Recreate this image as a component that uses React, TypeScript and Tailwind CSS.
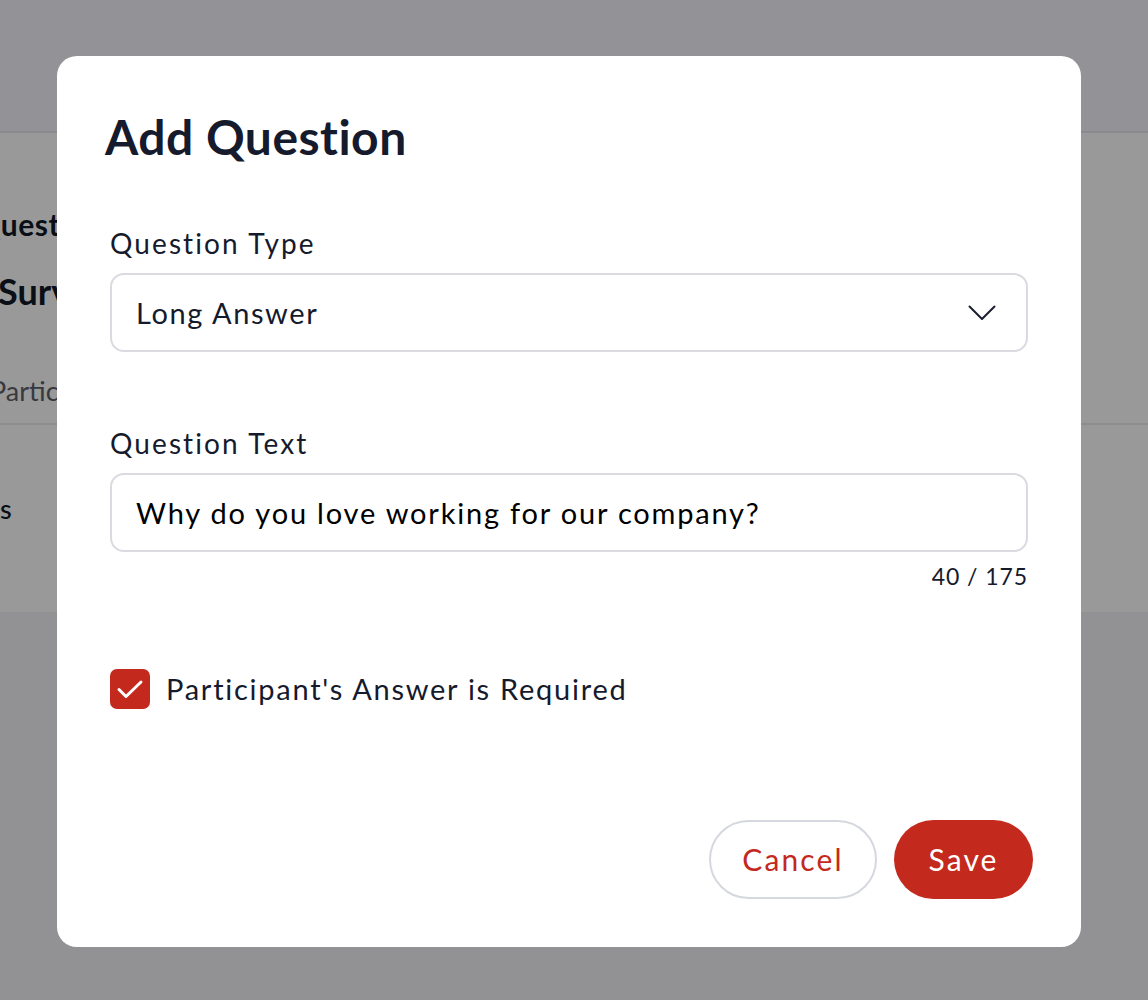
import { useState } from "react";

const MAX_CHARS = 175;

function ChevronDown() {
  return (
    <svg width="28" height="16" viewBox="0 0 28 16" fill="none" aria-hidden="true">
      <path d="M1.5 1.5 14 14 26.5 1.5" stroke="#1b1f2e" strokeWidth="2" strokeLinecap="round" strokeLinejoin="round" />
    </svg>
  );
}

function CheckMark() {
  return (
    <svg width="40" height="40" viewBox="0 0 40 40" fill="none" aria-hidden="true">
      <path d="M9 20.5 16 27.5 31 13" stroke="#fff" strokeWidth="3" strokeLinecap="round" strokeLinejoin="round" />
    </svg>
  );
}

function BackgroundPage() {
  return (
    <div className="min-h-screen bg-[#f3f3f7]">
      <div className="h-[133px] bg-[#f5f5fc] border-b-2 border-[#e7e7ed]" />
      <div className="bg-white h-[479px] overflow-hidden">
        <div className="h-[292px] border-b-2 border-[#ececf0] pt-[76px]">
          <div className="-ml-[24px] text-[30px] font-bold text-[#111827] leading-[30px] tracking-[0.02em]">Questions</div>
          <div className="-ml-[2px] mt-[30px] text-[36px] font-bold text-[#111827] leading-[44px]">Survey Questions</div>
          <div className="-ml-[10px] mt-[62px] text-[27px] text-[#5d5f6b] leading-[32px]">Participants</div>
        </div>
        <div className="-ml-[110px] pt-[68px] text-[27px] font-medium text-[#111827] leading-[32px]">Questions</div>
      </div>
    </div>
  );
}

export default function App() {
  const [questionType] = useState("Long Answer");
  const [text, setText] = useState("Why do you love working for our company?");
  const [required, setRequired] = useState(true);

  return (
    <div className="relative font-['Lato','Noto_Sans',sans-serif]">
      <BackgroundPage />
      <div className="fixed inset-0 bg-black/40" />
      <div className="fixed inset-0 flex items-start pl-[57px] pt-[56px]">
        <div className="w-[1024px] h-[891px] bg-white rounded-[20px] px-[53px] pt-[52px] pb-[48px] flex flex-col">
          <h2 className="-ml-[5px] text-[48px] leading-[58px] font-bold text-[#151a2c] tracking-[0.01em]">
            Add Question
          </h2>

          <label className="mt-[60px] text-[28px] leading-[34px] text-[#151a2c] tracking-[0.075em]">
            Question Type
          </label>
          <button className="mt-[13px] h-[79px] rounded-[14px] border-2 border-[#d9dbe0] flex items-center justify-between pl-[24px] pr-[30px] text-left">
            <span className="text-[29px] text-[#151a2c] tracking-[0.055em]">{questionType}</span>
            <ChevronDown />
          </button>

          <label className="mt-[74px] text-[28px] leading-[34px] text-[#151a2c] tracking-[0.075em]">
            Question Text
          </label>
          <input
            className="mt-[13px] h-[79px] rounded-[14px] border-2 border-[#d9dbe0] pl-[24px] pr-[24px] text-[29px] text-black tracking-[0.062em] outline-none"
            value={text}
            maxLength={MAX_CHARS}
            onChange={(e) => setText(e.target.value)}
          />
          <div className="mt-[10px] self-end text-[23px] leading-[28px] text-[#151a2c] tracking-[0.04em]">
            {text.length} / {MAX_CHARS}
          </div>

          <button
            role="checkbox"
            aria-checked={required}
            onClick={() => setRequired(!required)}
            className="mt-[77px] flex items-center gap-[16px] text-left"
          >
            <span
              className={
                required
                  ? "w-[40px] h-[40px] rounded-[7px] bg-[#c4291d] flex items-center justify-center"
                  : "w-[40px] h-[40px] rounded-[7px] border-2 border-[#d9dbe0]"
              }
            >
              {required && <CheckMark />}
            </span>
            <span className="text-[29px] text-[#151a2c] tracking-[0.06em]">Participant's Answer is Required</span>
          </button>

          <div className="mt-auto flex justify-end gap-[17px] -mr-[5px]">
            <button className="h-[79px] w-[168px] rounded-full border-2 border-[#d5d8de] text-[30px] text-[#c4291d] tracking-[0.07em]">
              Cancel
            </button>
            <button className="h-[79px] w-[139px] rounded-full bg-[#c4291d] text-[30px] text-white tracking-[0.07em]">
              Save
            </button>
          </div>
        </div>
      </div>
    </div>
  );
}
